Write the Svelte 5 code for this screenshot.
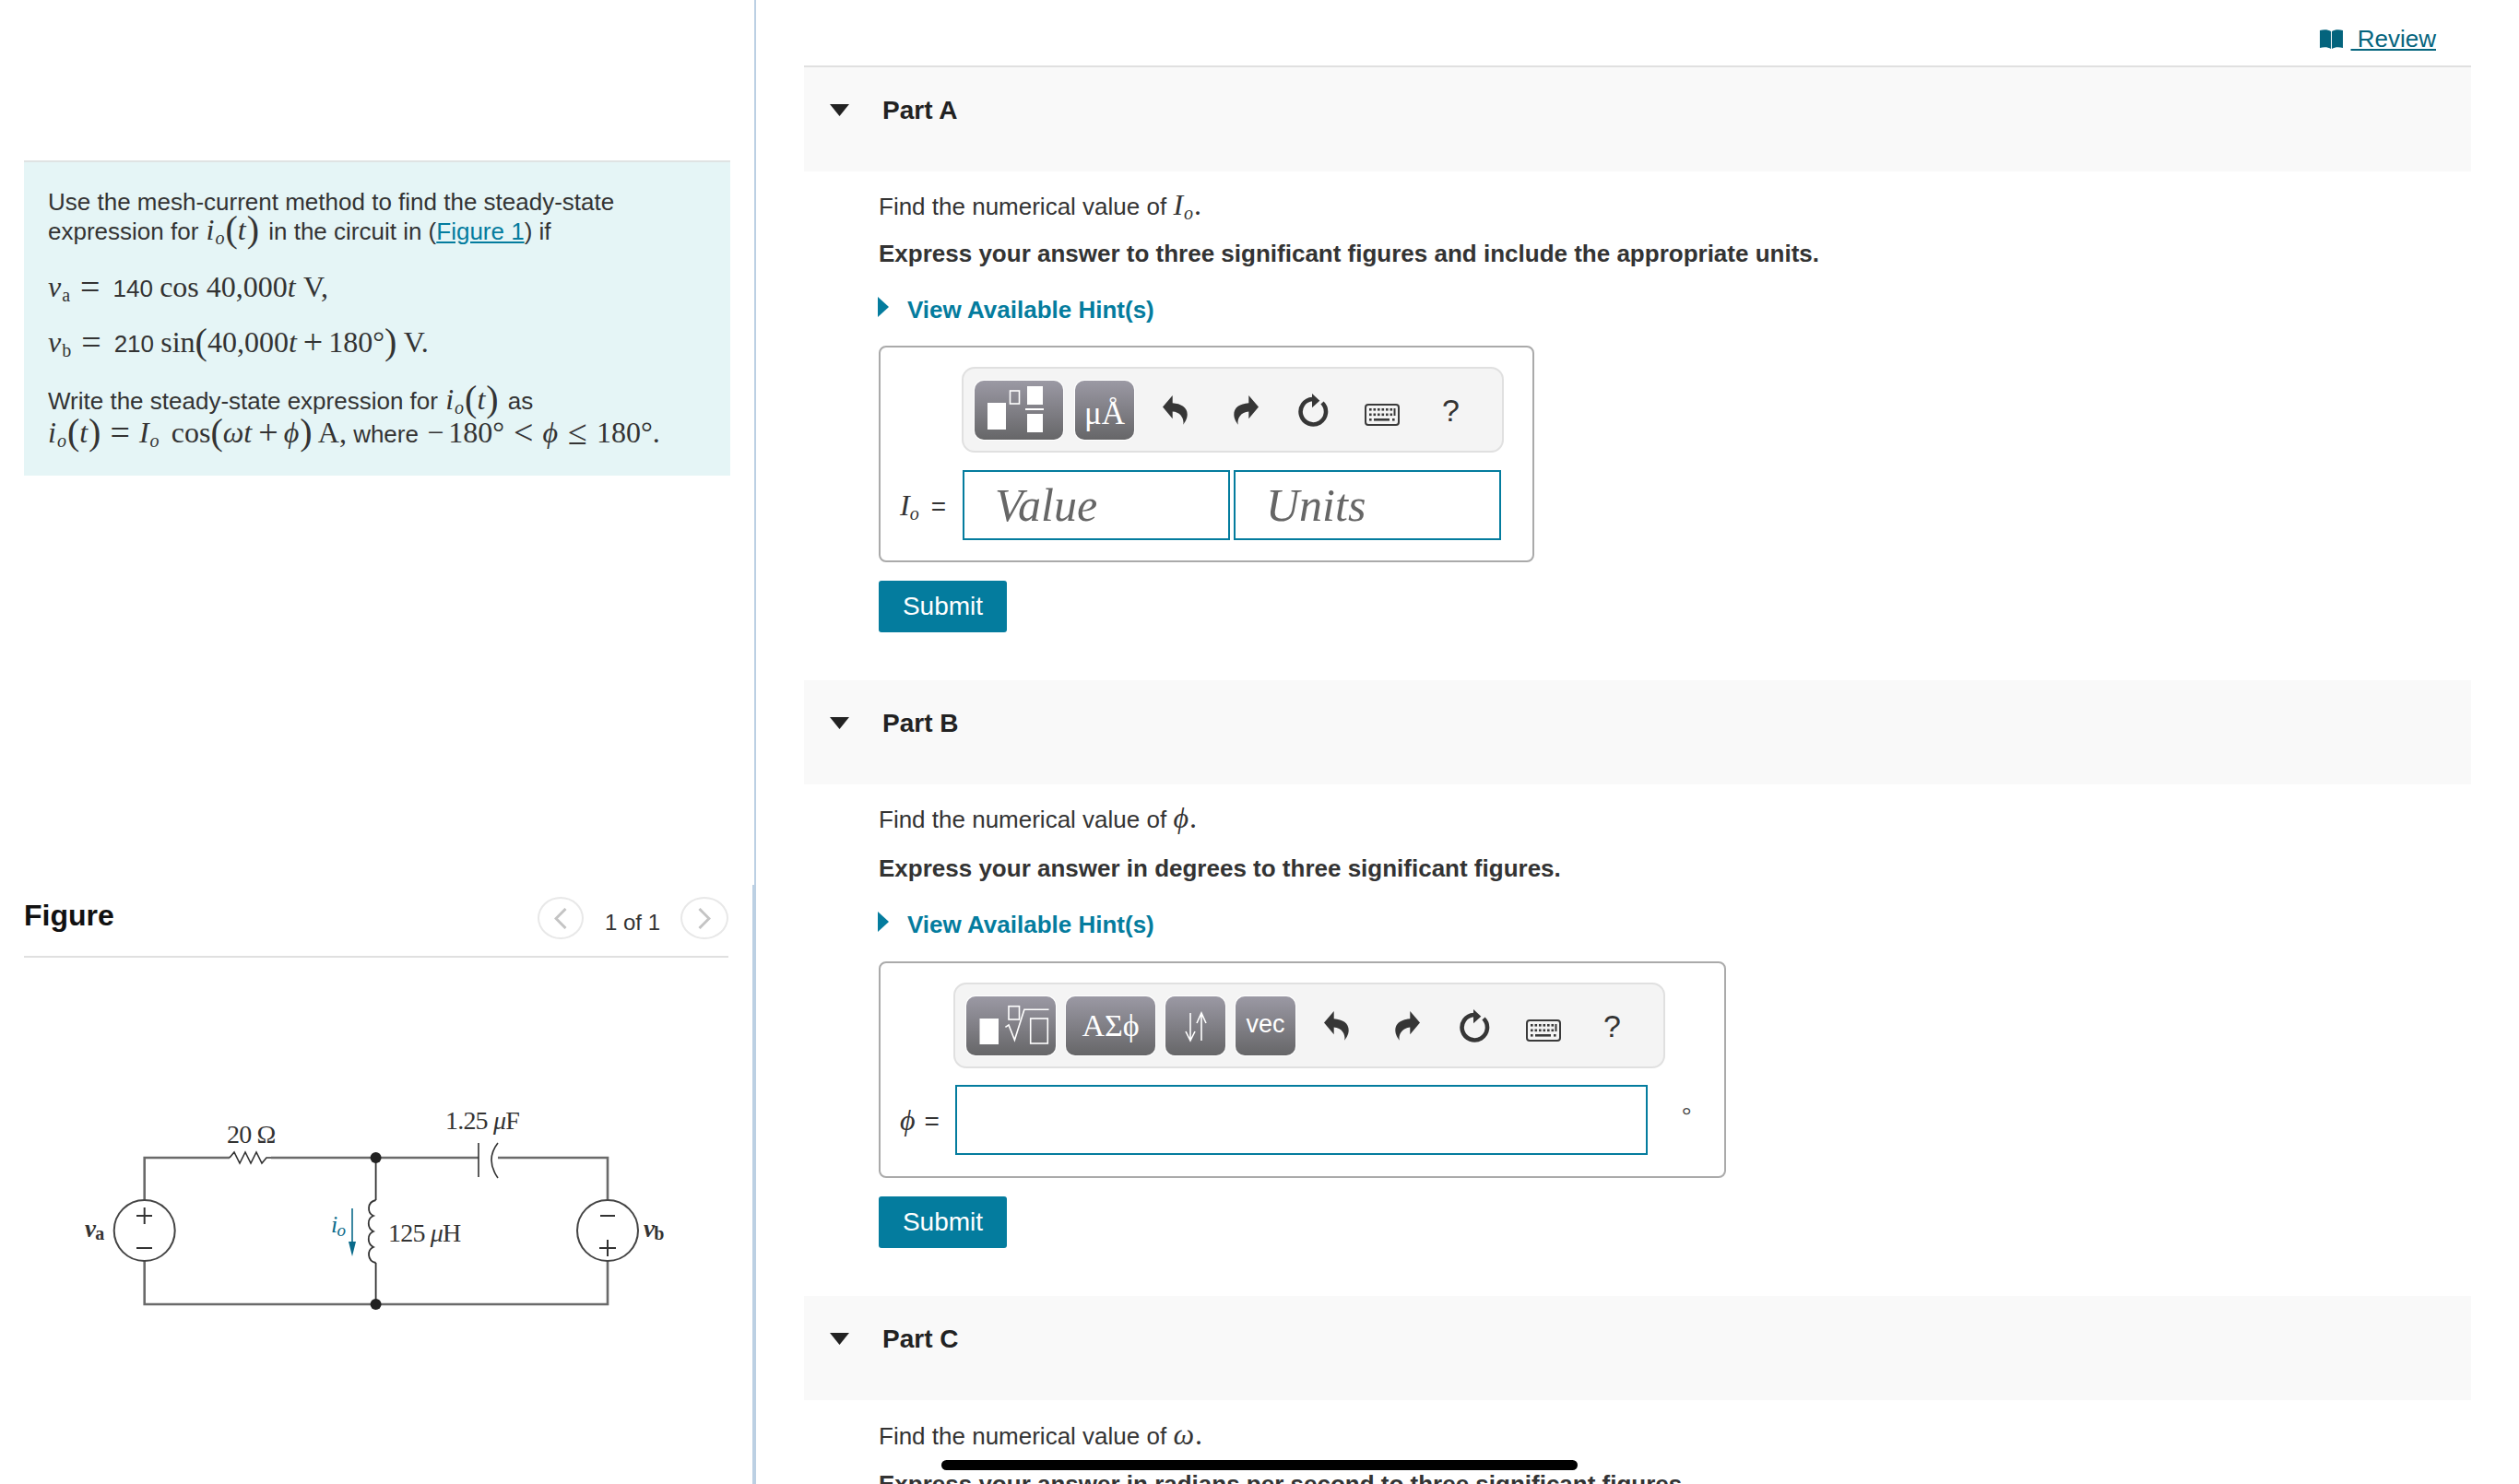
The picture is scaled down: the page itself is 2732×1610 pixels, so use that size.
<script>
  const row1 = [5, 9.5, 14, 18.5, 23, 27.5];
  const row2 = [5, 9.5, 14, 18.5, 23, 27.5];
</script>

{#snippet undoIcon(flip)}
  <svg class="ico-undo" class:flip width="27" height="32" viewBox="0 0 27 32">
    <path d="M0 12.6 L10.7 0 V8.3 C20 9 27 13 26.7 21 C26.5 26 24 29 22.3 31.7 C23.5 25 19 18 10.7 17.6 V25.3 Z" fill="#363636"/>
  </svg>
{/snippet}

{#snippet tools()}
  <span class="slot first">{@render undoIcon(false)}</span>
  <span class="slot s2">{@render undoIcon(true)}</span>
  <span class="slot s3">
    <svg width="33" height="36" viewBox="0 0 33 36">
      <path d="M26 10 A13.7 13.7 0 1 1 15.5 6" fill="none" stroke="#363636" stroke-width="4.6"/>
      <path d="M15 0 L23.3 7.7 L15 15.3 Z" fill="#363636"/>
    </svg>
  </span>
  <span class="slot s4">
    <svg class="kbd" width="38" height="24" viewBox="0 0 38 24">
      <rect x="1" y="1" width="36" height="22" rx="3" fill="#f4f4f4" stroke="#3a3a3a" stroke-width="2"/>
      {#each row1 as x}<rect {x} y="5" width="2.6" height="2.6" fill="#3a3a3a"/>{/each}
      {#each row2 as x}<rect {x} y="10.5" width="2.6" height="2.6" fill="#3a3a3a"/>{/each}
      <rect x="31.5" y="5" width="2" height="8" fill="#3a3a3a"/>
      <rect x="5" y="16" width="2.6" height="2.6" fill="#3a3a3a"/>
      <rect x="10" y="16" width="17" height="2.6" fill="#3a3a3a"/>
      <rect x="30" y="16" width="2.6" height="2.6" fill="#3a3a3a"/>
    </svg>
  </span>
  <span class="slot help">?</span>
{/snippet}

{#snippet partHead(label)}
  <div class="part-head">
    <svg class="caret" width="21" height="13" viewBox="0 0 21 13"><path d="M0 0 H21 L10.5 13 Z" fill="#222"/></svg>
    <span>{label}</span>
  </div>
{/snippet}

{#snippet hint()}
  <div class="hint">
    <svg width="12" height="22" viewBox="0 0 12 22"><path d="M0 0 L12 11 L0 22 Z" fill="#047c9e"/></svg>
    <span>View Available Hint(s)</span>
  </div>
{/snippet}

<div class="page">
  <aside class="left">
    <div class="intro">
      <p>Use the mesh-current method to find the steady-state expression for <span class="m io"><i>i</i><sub><i>o</i></sub><span class="par">(</span><i>t</i><span class="par">)</span></span> in the circuit in (<a href="#fig">Figure 1</a>) if</p>
      <p class="eq1"><span class="m"><i>v</i><sub>a</sub></span><span class="m rel eq">=</span>140 <span class="m">cos 40,000<i>t</i> V,</span></p>
      <p class="eq2"><span class="m"><i>v</i><sub>b</sub></span><span class="m rel eq">=</span>210 <span class="m">sin<span class="par">(</span>40,000<i>t</i><span class="op">+</span>180°<span class="par">)</span> V.</span></p>
      <p class="w1">Write the steady-state expression for <span class="m io"><i>i</i><sub><i>o</i></sub><span class="par">(</span><i>t</i><span class="par">)</span></span> as</p>
      <p class="w2"><span class="m"><i>i</i><sub><i>o</i></sub><span class="par">(</span><i>t</i><span class="par">)</span></span><span class="m rel">=</span><span class="m"><i>I</i><sub><i>o</i></sub></span> <span class="m cos">cos<span class="par">(</span><i>ωt</i><span class="op">+</span><i>ϕ</i><span class="par">)</span> A,</span> where <span class="m"><span class="neg">−</span>180°<span class="rel">&lt;</span><i>ϕ</i><span class="rel">≤</span>180°.</span></p>
    </div>

    <div class="fig-head">
      <h2>Figure</h2>
      <div class="nav">
        <span class="circ prev"><svg width="14" height="23" viewBox="0 0 14 23"><path d="M12.5 1 L2 11.5 L12.5 22" fill="none" stroke="#c4c4c4" stroke-width="3"/></svg></span>
        <span class="count">1 of 1</span>
        <span class="circ next"><svg width="14" height="23" viewBox="0 0 14 23"><path d="M1.5 1 L12 11.5 L1.5 22" fill="none" stroke="#c4c4c4" stroke-width="3"/></svg></span>
      </div>
    </div>

    <svg class="circuit" width="764" height="400" viewBox="26 1039 764 400">
      <g fill="none" stroke="#6a6a6a">
        <path d="M156.7 1302 V1256 H249 M294 1256 H519 M540 1256 H659 V1302" stroke-width="2.6"/>
        <path d="M156.7 1368 V1415 H659 V1368" stroke-width="2.6"/>
        <path d="M249 1256 L254 1250 L260 1262 L266 1250 L272 1262 L278 1250 L284 1262 L289 1256 H294" stroke="#333" stroke-width="1.6"/>
        <path d="M519 1240 V1277" stroke="#333" stroke-width="1.6"/>
        <path d="M540 1240 Q526 1258 540 1278" stroke="#333" stroke-width="1.6"/>
        <path d="M407.6 1256 V1302 M407.6 1370 V1415" stroke="#333" stroke-width="1.8"/>
        <path d="M407.6 1302 C398 1304 398 1316 405 1319 C398 1322 398 1332 405 1336 C398 1339 398 1349 405 1353 C398 1356 398 1368 407.6 1370" stroke="#333" stroke-width="1.8"/>
        <circle cx="156.7" cy="1335" r="33" stroke="#444" stroke-width="2"/>
        <circle cx="659" cy="1335" r="33" stroke="#444" stroke-width="2"/>
        <path d="M148 1319 H165 M156.7 1310 V1328 M148 1354 H165" stroke="#333" stroke-width="2"/>
        <path d="M651 1319 H667 M650 1354 H668 M659 1345 V1363" stroke="#333" stroke-width="2"/>
      </g>
      <circle cx="407.6" cy="1256" r="6" fill="#222"/>
      <circle cx="407.6" cy="1415" r="6" fill="#222"/>
      <path d="M382 1311 V1350" stroke="#0a6a8a" stroke-width="1.6"/>
      <path d="M378 1347 H386 L382 1363 Z" fill="#0a6a8a"/>
      <g class="ct">
        <text x="246" y="1240">20 Ω</text>
        <text x="483" y="1225">1.25 <tspan font-style="italic">μ</tspan>F</text>
        <text x="421" y="1347">125 <tspan font-style="italic">μ</tspan>H</text>
        <text x="92" y="1342" font-style="italic" font-size="27" font-weight="700">v<tspan dy="3" font-size="20" font-style="normal">a</tspan></text>
        <text x="698" y="1342" font-style="italic" font-size="27" font-weight="700">v<tspan dy="3" font-size="20" font-style="normal">b</tspan></text>
        <text x="359" y="1337" font-style="italic" font-size="26" fill="#0a6a8a">i<tspan dy="4" font-size="19">o</tspan></text>
      </g>
    </svg>
  </aside>

  <div class="divider"></div>

  <main class="right">
    <div class="review">
      <svg width="25" height="21" viewBox="0 0 25 21"><path d="M0 1 C4 0 9 0 12 2 V21 C9 19 4 19 0 20 Z M13 2 C16 0 21 0 25 1 V20 C21 19 16 19 13 21 Z" fill="#04647d"/></svg>
      <a href="#review">&nbsp;Review</a>
    </div>

    {@render partHead('Part A')}
    <section class="body">
      <p class="find">Find the numerical value of <span class="m"><i>I</i><sub><i>o</i></sub>.</span></p>
      <p class="express">Express your answer to three significant figures and include the appropriate units.</p>
      {@render hint()}
      <div class="answer a">
        <div class="toolbar ta">
          <span class="tbtn w96">
            <svg width="96" height="64" viewBox="0 0 96 64" fill="#fff">
              <rect x="14" y="24" width="20" height="29"/>
              <rect x="38.5" y="11" width="10" height="14" fill="none" stroke="#fff" stroke-width="1.6"/>
              <rect x="57" y="6" width="17" height="20"/>
              <rect x="55" y="30" width="20" height="2"/>
              <rect x="57" y="36" width="17" height="20"/>
            </svg>
          </span>
          <span class="tbtn w64 units-btn">μÅ</span>
          {@render tools()}
        </div>
        <div class="row">
          <span class="lab la"><i>I</i><sub><i>o</i></sub> <em>=</em></span>
          <input class="fld half" placeholder="Value" />
          <input class="fld half u" placeholder="Units" />
        </div>
      </div>
      <button class="submit">Submit</button>
    </section>

    <div class="gap"></div>

    {@render partHead('Part B')}
    <section class="body pb">
      <p class="find">Find the numerical value of <span class="m"><i>ϕ</i>.</span></p>
      <p class="express">Express your answer in degrees to three significant figures.</p>
      {@render hint()}
      <div class="answer b">
        <div class="toolbar tb">
          <span class="tbtn w97">
            <svg width="97" height="64" viewBox="0 0 97 64" fill="#fff">
              <rect x="14.5" y="24" width="20.5" height="28"/>
              <rect x="46" y="10.7" width="11.5" height="14.3" fill="none" stroke="#fff" stroke-width="1.6"/>
              <path d="M42.4 33.3 L46 31 L52.4 47.3 L62.9 14.3 H89.5" fill="none" stroke="#fff" stroke-width="1.6"/>
              <rect x="69.7" y="24" width="18.6" height="27" fill="none" stroke="#fff" stroke-width="1.6"/>
            </svg>
          </span>
          <span class="tbtn w97 greek">ΑΣϕ</span>
          <span class="tbtn w65">
            <svg width="65" height="64" viewBox="0 0 65 64" fill="none" stroke="#fff" stroke-width="1.6">
              <path d="M27 18 V47 M22 38 L27 48 L32 38"/>
              <path d="M39 48 V19 M34 29 L39 18 L44 29"/>
            </svg>
          </span>
          <span class="tbtn w65 vec">vec</span>
          {@render tools()}
        </div>
        <div class="row rb">
          <span class="lab lb"><i>ϕ</i> <em>=</em></span>
          <input class="fld wide" />
          <span class="deg">°</span>
        </div>
      </div>
      <button class="submit">Submit</button>
    </section>

    <div class="gap"></div>

    {@render partHead('Part C')}
    <section class="body pc">
      <p class="find">Find the numerical value of <span class="m"><i>ω</i>.</span></p>
      <p class="express">Express your answer in radians per second to three significant figures.</p>
    </section>
  </main>

  <div class="scrollbar"></div>
</div>

<style>
  :global(body) { margin: 0; background: #fff; }
  .page {
    position: relative;
    display: flex;
    width: 2732px;
    height: 1610px;
    overflow: hidden;
    font-family: "Liberation Sans", Arial, sans-serif;
    font-size: 26px;
    line-height: 32px;
    color: #333;
  }
  p { margin: 0; }

  /* left column */
  .left { width: 818px; flex: none; padding: 174px 0 0 26px; box-sizing: border-box; }
  .intro {
    width: 766px;
    box-sizing: border-box;
    height: 342px;
    background: #e5f5f6;
    border-top: 2px solid #dfe3e3;
    padding: 27px 26px 0;
  }
  .intro a { color: #047c9e; text-decoration: underline; }
  .eq1 { margin-top: 30px; }
  .eq2 { margin-top: 28px; }
  .w1 { margin-top: 30px; }
  .w2 { margin-top: 4px; }
  .m { font-family: "Liberation Serif", "DejaVu Serif", serif; font-size: 32px; line-height: 0; }
  .io { margin: 0 3px 0 1px; }
  .cos { margin-left: 5px; }
  sub { font-size: 20px; line-height: 0; vertical-align: -5px; }
  .par { font-size: 40px; line-height: 0; vertical-align: -2px; font-weight: 300; }
  .m i { margin-right: 1px; }
  .rel { font-size: 38px; line-height: 0; margin: 0 10px; vertical-align: -2px; }
  .rel.eq { margin: 0 14px 0 11px; }
  .op { font-size: 38px; line-height: 0; margin: 0 6px; vertical-align: -2px; }
  .neg { margin: 0 5px 0 2px; }

  .fig-head {
    width: 764px;
    margin-top: 457px;
    height: 66px;
    box-sizing: border-box;
    display: flex;
    justify-content: space-between;
    border-bottom: 2px solid #e0e0e0;
  }
  h2 { margin: 0; font-size: 32px; line-height: 40px; font-weight: 700; color: #111; }
  .nav { display: flex; align-items: flex-start; }
  .circ {
    box-sizing: border-box;
    height: 46px;
    border: 2px solid #e8e8e8;
    border-radius: 50%;
    display: flex;
    align-items: center;
    justify-content: center;
  }
  .prev { width: 50px; }
  .next { width: 52px; }
  .count { font-size: 24px; line-height: 46px; margin: 5px 22px 0 23px; color: #333; }
  .circuit { display: block; }
  .ct { font-family: "Liberation Serif", serif; font-size: 28px; fill: #333; letter-spacing: -0.8px; }

  .divider { position: relative; width: 2px; flex: none; background: #bcd0e3; }
  .divider::after { content: ""; position: absolute; top: 960px; bottom: 0; left: -2px; width: 3px; background: #bcd0e3; }

  /* right column */
  .right { width: 1808px; flex: none; margin-left: 52px; }
  .review {
    box-sizing: border-box;
    height: 73px;
    display: flex;
    justify-content: flex-end;
    align-items: flex-start;
    padding: 26px 38px 0 0;
    border-bottom: 2px solid #e0e0e0;
  }
  .review svg { margin: 6px 9px 0 0; }
  .review a { color: #04647d; text-decoration: underline; }
  .part-head {
    height: 113px;
    box-sizing: border-box;
    background: #f9f9f9;
    display: flex;
    align-items: flex-start;
    padding: 31px 0 0 28px;
    font-size: 28px;
    line-height: 32px;
    font-weight: 700;
    color: #222;
  }
  .caret { margin: 9px 36px 0 0; }
  .body { padding-left: 81px; }
  .find { margin-top: 22px; }
  .express { margin-top: 19px; font-weight: 700; }
  .pb .express { margin-top: 21px; }
  .pc .find { margin-top: 23px; }
  .pc .express { margin-top: 20px; }
  .hint {
    margin-top: 29px;
    height: 32px;
    display: flex;
    font-weight: 700;
    color: #047c9e;
  }
  .hint svg { margin: 2px 20px 0 -1px; }
  .answer {
    box-sizing: border-box;
    margin-top: 23px;
    border: 2px solid #aaa;
    border-radius: 8px;
    padding: 21px 0 22px 21px;
  }
  .answer.a { width: 711px; }
  .answer.b { width: 919px; margin-top: 24px; height: 235px; }
  .toolbar {
    box-sizing: border-box;
    height: 93px;
    background: #f4f4f4;
    border: 2px solid #e0e0e0;
    border-radius: 14px;
    display: flex;
    align-items: center;
    gap: var(--g);
    padding-left: 12px;
  }
  .ta { width: 588px; margin-left: 67px; --g: 13px; }
  .tb { width: 772px; margin-left: 58px; --g: 11px; }
  .tbtn {
    box-sizing: border-box;
    height: 64px;
    flex: none;
    border-radius: 10px;
    background: linear-gradient(#9b99a4, #666668);
    color: #fff;
    display: flex;
    align-items: center;
    justify-content: center;
    overflow: hidden;
    box-shadow: 0 0 0 1px #fff;
  }
  .w96 { width: 96px; }
  .w97 { width: 97px; }
  .w64 { width: 64px; }
  .w65 { width: 65px; }
  .units-btn { font-family: "Liberation Serif", serif; font-size: 35px; padding-top: 8px; }
  .greek { font-family: "Liberation Serif", serif; font-size: 34px; }
  .vec { font-size: 27px; padding-bottom: 4px; }
  .slot {
    width: 75px;
    flex: none;
    margin-left: calc(var(--g) * -1);
    display: flex;
    justify-content: center;
    align-items: center;
  }
  .slot.first { margin-left: calc(var(--g) * -1 + 7px); }
  .slot.s2 { margin-left: calc(var(--g) * -1 + 2px); }
  .slot.s3 { margin-left: calc(var(--g) * -1 - 2px); }
  .slot.s4 { margin-left: calc(var(--g) * -1 - 1px); }
  .flip { transform: scaleX(-1); }
  .kbd { margin-top: 10px; }
  .help { font-size: 34px; color: #333; }

  .row { display: flex; margin-top: 19px; height: 76px; }
  .rb { margin-top: 18px; }
  .lab {
    flex: none;
    font-family: "Liberation Serif", serif;
    font-size: 32px;
    line-height: 76px;
    color: #333;
  }
  .la { width: 68px; }
  .lb { width: 60px; }
  .lab em { font-family: "Liberation Sans", sans-serif; font-style: normal; font-size: 28px; }
  .la em { margin-left: 5px; }
  .lb em { margin-left: 2px; }
  .lab sub { vertical-align: -5px; }
  .fld {
    box-sizing: border-box;
    height: 76px;
    border: 2px solid #047c9e;
    background: #fff;
    padding: 0 0 0 33px;
    margin: 0;
    outline: none;
    font-family: "Liberation Serif", serif;
    font-style: italic;
    font-size: 50px;
    color: #666;
    border-radius: 0;
  }
  .fld::placeholder { color: #666; opacity: 1; }
  .half { width: 290px; }
  .half.u { margin-left: 4px; }
  .wide { width: 751px; }
  .deg { font-family: "Liberation Serif", serif; font-size: 26px; margin: 17px 0 0 37px; color: #444; }
  .submit {
    display: block;
    margin: 20px 0 0;
    width: 139px;
    height: 56px;
    border: 0;
    border-radius: 3px;
    background: #047c9e;
    color: #fff;
    font-family: "Liberation Sans", Arial, sans-serif;
    font-size: 28px;
    padding: 0;
  }
  .gap { height: 52px; }
  .scrollbar {
    position: absolute;
    left: 1021px;
    top: 1584px;
    width: 690px;
    height: 11px;
    border-radius: 6px;
    background: #000;
  }
</style>
